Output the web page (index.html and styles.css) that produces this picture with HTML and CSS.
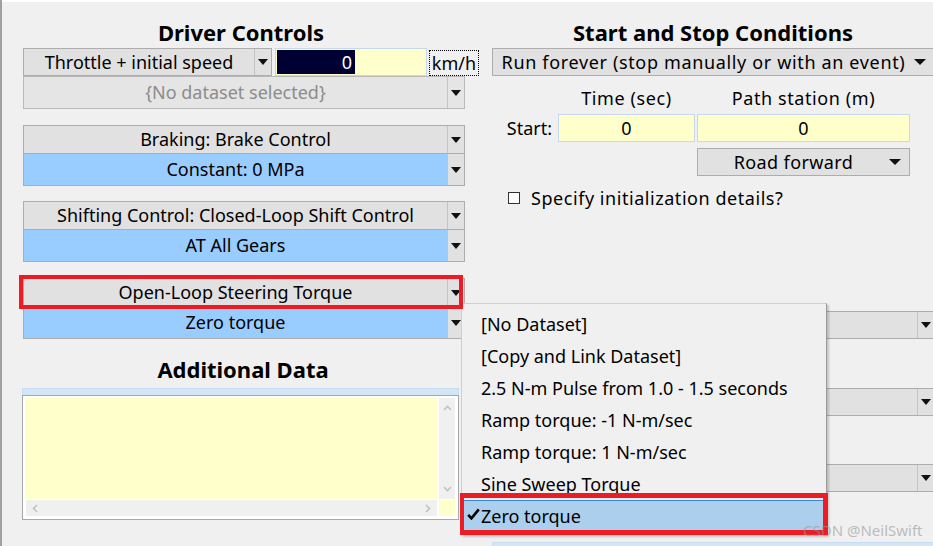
FILE: index.html
```html
<!DOCTYPE html>
<html lang="en">
<head>
    <meta charset="UTF-8">
    <meta name="viewport" content="width=device-width, initial-scale=1.0">
    <link rel="stylesheet" href="styles.css">
    <title>Driver Controls</title>
</head>
<body>
    <div class="window">
        <div class="left">
            <h2 class="title">Driver Controls</h2>
            <div class="speed-row">
                <div class="combo combo-short">
                    <span class="combo-text">Throttle + initial speed</span>
                    <span class="combo-arrow"></span>
                </div>
                <div class="field field-speed"><span class="sel">0</span></div>
                <div class="unit">km/h</div>
            </div>
            <div class="combo combo-disabled">
                <span class="combo-text">{No dataset selected}</span>
                <span class="combo-arrow"></span>
            </div>

            <div class="group">
                <div class="row"><span class="combo-text">Braking: Brake Control</span><span class="combo-arrow"></span></div>
                <div class="row row-value"><span class="combo-text">Constant: 0 MPa</span><span class="combo-arrow"></span></div>
            </div>

            <div class="group group-tight">
                <div class="row"><span class="combo-text">Shifting Control: Closed-Loop Shift Control</span><span class="combo-arrow"></span></div>
                <div class="row row-value"><span class="combo-text">AT All Gears</span><span class="combo-arrow"></span></div>
            </div>

            <div class="group">
                <div class="row"><span class="combo-text">Open-Loop Steering Torque</span><span class="combo-arrow"></span></div>
                <div class="row row-value"><span class="combo-text">Zero torque</span><span class="combo-arrow"></span></div>
            </div>

            <h2 class="title title-data">Additional Data</h2>
            <div class="memo-strip"></div>
            <div class="memo">
                <div class="memo-text"></div>
                <div class="scroll scroll-v">
                    <svg width="9" height="6" viewBox="0 0 9 6"><polyline points="1,5 4.5,1.5 8,5" fill="none" stroke="#c2c2c2" stroke-width="1.6"/></svg>
                    <svg width="9" height="6" viewBox="0 0 9 6"><polyline points="1,1 4.5,4.5 8,1" fill="none" stroke="#c2c2c2" stroke-width="1.6"/></svg>
                </div>
                <div class="scroll scroll-h">
                    <svg width="6" height="9" viewBox="0 0 6 9"><polyline points="5,1 1.5,4.5 5,8" fill="none" stroke="#c2c2c2" stroke-width="1.6"/></svg>
                    <svg width="6" height="9" viewBox="0 0 6 9"><polyline points="1,1 4.5,4.5 1,8" fill="none" stroke="#c2c2c2" stroke-width="1.6"/></svg>
                </div>
                <div class="memo-corner"></div>
            </div>
        </div>

        <div class="right">
            <h2 class="title">Start and Stop Conditions</h2>
            <div class="combo combo-plain combo-wide">
                <span class="combo-text">Run forever (stop manually or with an event)</span>
                <span class="combo-arrow"></span>
            </div>
            <div class="cond">
                <span></span>
                <span class="cond-label">Time (sec)</span>
                <span class="cond-label">Path station (m)</span>
                <span class="cond-start">Start:</span>
                <div class="field">0</div>
                <div class="field">0</div>
                <div class="combo combo-plain combo-road">
                    <span class="combo-text">Road forward</span>
                    <span class="combo-arrow"></span>
                </div>
            </div>
            <div class="check-row">
                <span class="checkbox"></span>
                <span>Specify initialization details?</span>
            </div>
            <div class="combo combo-back first"><span class="combo-text"></span><span class="combo-arrow"></span></div>
            <div class="combo combo-back second"><span class="combo-text"></span><span class="combo-arrow"></span></div>
            <div class="combo combo-back"><span class="combo-text"></span><span class="combo-arrow"></span></div>
            <div class="memo-strip strip-right"></div>
        </div>
    </div>

    <!-- dropdown list opened from the steering value box -->
    <div class="popup">
        <div class="item">[No Dataset]</div>
        <div class="item">[Copy and Link Dataset]</div>
        <div class="item">2.5 N-m Pulse from 1.0 - 1.5 seconds</div>
        <div class="item">Ramp torque: -1 N-m/sec</div>
        <div class="item">Ramp torque: 1 N-m/sec</div>
        <div class="item">Sine Sweep Torque</div>
        <div class="item item-selected">
            <svg class="tick" width="13" height="12" viewBox="0 0 13 12"><path d="M1.2 6.8 L4.4 10.4 L11.8 1.4" fill="none" stroke="#000" stroke-width="2.6"/></svg>
            Zero torque
        </div>
    </div>

    <div class="mark mark-steering"></div>
    <div class="mark mark-item"></div>
    <div class="watermark">CSDN @NeilSwift</div>
</body>
</html>
```

FILE: styles.css
```css
*{
    box-sizing: border-box;
}

body{
    margin: 0;
    width: 933px;
    height: 546px;
    overflow: hidden;
    position: relative;
    background-color: #f0f0f0;
    border-left: 2px solid #a0a0a0;
    font-family: "Noto Sans", "Open Sans", sans-serif;
    font-size: 18px;
    color: #000;
}

.window{
    height: 100%;
    border-top: 2px solid #fff;
    display: flex;
    gap: 27px;
    padding-left: 21px;
}

.left, .right{
    width: 442px;
    flex-shrink: 0;
    display: flex;
    flex-direction: column;
}

.title{
    margin: 14px 0 0;
    height: 32px;
    line-height: 32px;
    font-size: 22px;
    font-weight: bold;
    text-align: center;
    white-space: nowrap;
}

.left .title{
    padding-right: 6px;
}

.title-data{
    margin-top: 14px;
    padding-left: 4px;
}

/* combo boxes */
.combo{
    display: flex;
    height: 28px;
    flex-shrink: 0;
    border: 1px solid #adadad;
    background-color: #e1e1e1;
}

.combo-text{
    flex: 1;
    text-align: center;
    line-height: 26px;
    white-space: nowrap;
    overflow: hidden;
}

.combo-arrow{
    width: 17px;
    flex-shrink: 0;
    border-left: 1px solid #c3c3c3;
    display: flex;
    align-items: center;
    justify-content: center;
    background-color: #e1e1e1;
}

.combo-arrow::after{
    content: "";
    border-left: 5px solid transparent;
    border-right: 5px solid transparent;
    border-top: 6px solid #111;
}

.combo-plain .combo-arrow{
    width: 20px;
    border-left: none;
    justify-content: flex-start;
}

.combo-plain .combo-arrow::after{
    border-left-width: 6px;
    border-right-width: 6px;
}

.speed-row{
    display: flex;
    height: 28px;
}

.speed-row > *{
    flex-shrink: 0;
}

.combo-short{
    width: 249px;
}

.field{
    height: 28px;
    background-color: #ffffcc;
    border: 1px solid #c4d9ee;
    text-align: center;
    line-height: 26px;
}

.field-speed{
    width: 152px;
    margin-left: 3px;
    text-align: left;
    padding: 1px;
}

.field-speed .sel{
    display: block;
    width: 78px;
    height: 24px;
    line-height: 24px;
    background-color: #000033;
    color: #fff;
    text-align: right;
    padding-right: 3px;
}

.unit{
    width: 50px;
    margin-left: 2px;
    margin-top: 2px;
    border: 1px dotted #000;
    line-height: 24px;
    text-align: center;
}

.combo-disabled{
    height: 33px;
    border-color: #b9b9b9;
    background-color: #e5e5e5;
    color: #8c8c8c;
}

.combo-disabled .combo-text{
    line-height: 31px;
}

.combo-disabled .combo-arrow{
    background-color: #e5e5e5;
}

/* two-row groups: model + dataset */
.group{
    margin-top: 16px;
    border: 1px solid #adadad;
    background-color: #e1e1e1;
}

.group-tight{
    margin-top: 15px;
}

.group .row{
    display: flex;
    height: 27px;
}

.group .row + .row{
    height: 32px;
    border-top: 1px solid #adadad;
}

.row-value .combo-text{
    background-color: #99ccff;
    line-height: 31px;
}

/* memo with scroll bars */
.memo-strip{
    margin-top: 3px;
    margin-left: -1px;
    width: 437px;
    height: 7px;
    background-color: #d6e5f3;
    border: 1px solid #c6dcf0;
    border-bottom: none;
}

.memo{
    margin-left: -1px;
    width: 437px;
    height: 125px;
    border: 1px solid #a7a7a7;
    background-color: #fff;
    padding: 2px 3px 3px 2px;
    display: grid;
    grid-template-columns: 412px 16px;
    grid-template-rows: 101px 16px;
    column-gap: 2px;
    row-gap: 1px;
}

.memo-text, .memo-corner{
    background-color: #ffffcc;
}

.scroll{
    background-color: #f0f0f0;
    display: flex;
    align-items: center;
    justify-content: space-between;
}

.scroll-v{
    flex-direction: column;
    padding: 7px 0;
}

.scroll-h{
    margin-left: 1px;
    padding: 0 6px;
}

/* right side */
.combo-wide{
    width: 443px;
}

.combo-wide .combo-text{
    letter-spacing: 0.65px;
}

.cond{
    margin-top: 8px;
    display: grid;
    grid-template-columns: 64px 137px 213px;
    grid-template-rows: 28px 28px 32px;
    column-gap: 2px;
    row-gap: 2px;
    line-height: 28px;
}

.cond-label{
    text-align: center;
    letter-spacing: 0.6px;
}

.cond-start{
    text-align: right;
    padding-right: 4px;
}

.combo-road{
    grid-column: 3;
    margin-top: 4px;
}

.combo-road .combo-text{
    line-height: 26px;
    letter-spacing: 0.4px;
}

.check-row{
    margin-top: 10px;
    height: 26px;
    display: flex;
    align-items: center;
    letter-spacing: 0.55px;
}

.checkbox{
    width: 12px;
    height: 12px;
    margin-left: 16px;
    margin-right: 11px;
    border: 1px solid #333;
    background-color: #fff;
}

.combo-back{
    width: 443px;
    margin-top: 48px;
}

.combo-back.first{
    margin-top: 101px;
}

.combo-back.second{
    margin-top: 49px;
}

.strip-right{
    width: 443px;
    margin-top: 50px;
    margin-left: 0;
}

/* opened list */
.popup{
    position: absolute;
    left: 459px;
    top: 303px;
    width: 366px;
    height: 232px;
    background-color: #f0f0f0;
    border: 1px solid #cfcfcf;
    border-right-color: #9a9a9a;
    box-shadow: 2px 2px 2px rgba(0, 0, 0, 0.18);
    padding-top: 4px;
}

.item{
    position: relative;
    height: 32px;
    line-height: 32px;
    padding-left: 19px;
    white-space: nowrap;
}

.item-selected{
    background-color: #abcfec;
    border-top: 1px solid #3a86d8;
    line-height: 30px;
}

.tick{
    position: absolute;
    left: 5px;
    top: 7px;
}

.mark{
    position: absolute;
    border: 4px solid #ed1c24;
}

.mark-steering{
    left: 17px;
    top: 275px;
    width: 444px;
    height: 34px;
}

.mark-item{
    left: 458px;
    top: 493px;
    width: 368px;
    height: 42px;
    border-width: 5px 5px 5px 4px;
}

.watermark{
    position: absolute;
    left: 801px;
    top: 520px;
    font-size: 15px;
    line-height: 20px;
    color: rgba(150, 150, 150, 0.6);
}
```
